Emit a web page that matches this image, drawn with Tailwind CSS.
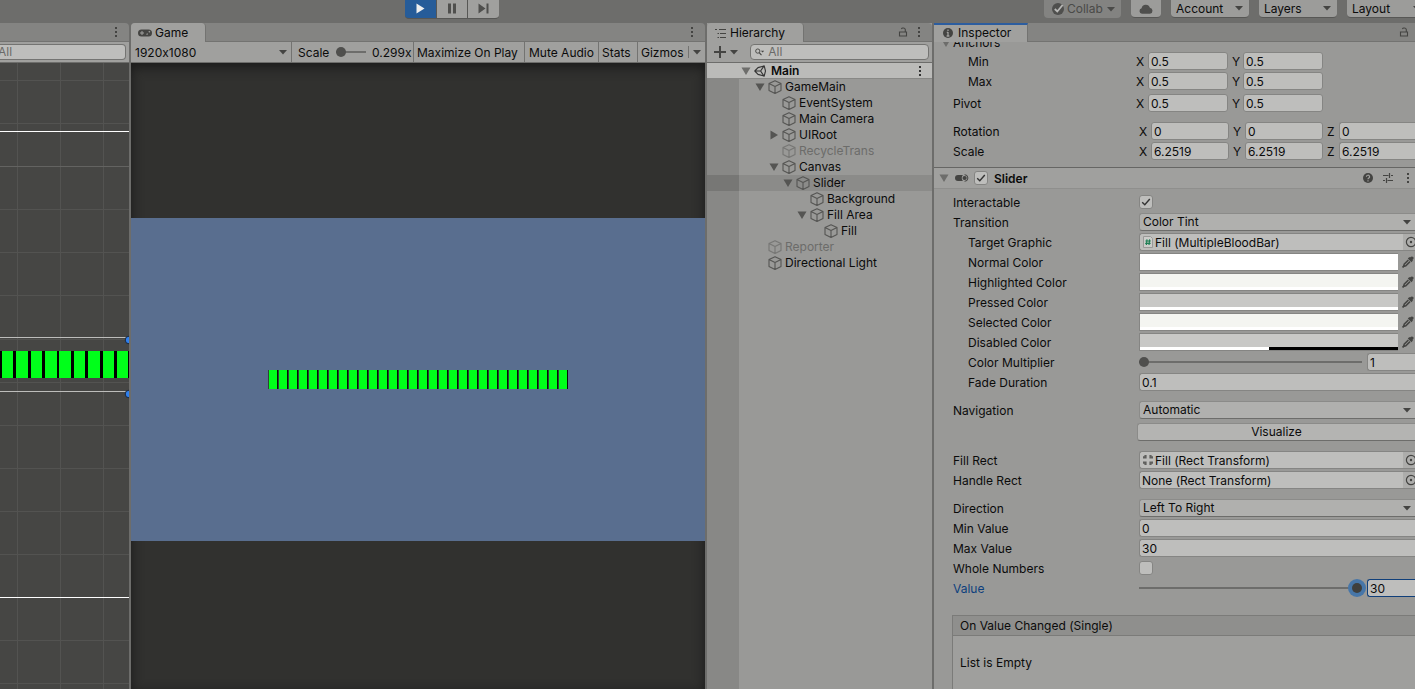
<!doctype html>
<html lang="en">
<head>
  <meta charset="utf-8">
  <meta name="viewport" content="width=device-width, initial-scale=1">
  <title>Unity Editor</title>
  <script src="https://cdn.jsdelivr.net/npm/@tailwindcss/browser@4"></script>
</head>
<body class="h-screen overflow-hidden flex flex-col bg-[#6d6d6b] text-[#0b0b0b] text-xs leading-4 font-['Inter',sans-serif] [font-feature-settings:'calt'_0]">

<!-- Shared icons -->
<svg class="hidden">
  <symbol id="cube" viewBox="0 0 14 14">
    <path d="M7 .7 13 3.5V10.5L7 13.4 1 10.5V3.5ZM1 3.5 7 6.4 13 3.5M7 6.4V13.4" fill="none" stroke="currentColor" stroke-width="1.1" stroke-linejoin="round" />
  </symbol>
  <symbol id="down" viewBox="0 0 8 5"><path d="M0 0H8L4 4.6Z" fill="currentColor" /></symbol>
  <symbol id="fold" viewBox="0 0 10 10"><path d="M.5 1.5H9.5L5 9Z" fill="currentColor" /></symbol>
  <symbol id="dots" viewBox="0 0 2 10"><path d="M0 0H2V2H0ZM0 4H2V6H0ZM0 8H2V10H0Z" fill="currentColor" /></symbol>
  <symbol id="lock" viewBox="0 0 10 10">
    <path d="M1.5 5H8.5V9H1.5ZM7.3 5V2.8A1.8 1.8 0 0 0 5.5 1H4.8A1.6 1.6 0 0 0 3.4 2" fill="none" stroke="currentColor" stroke-width="1.1" />
  </symbol>
  <symbol id="picker" viewBox="0 0 12 12">
    <circle cx="6" cy="6" r="4.6" fill="none" stroke="currentColor" stroke-width="1.2" /><circle cx="6" cy="6" r="1.2" fill="currentColor" />
  </symbol>
  <symbol id="dropper" viewBox="0 0 12 12">
    <path d="M8 1.4 9 .7Q10.2 0 11.2 1 12 2 11.3 3L10.4 4 11 4.6 9.4 6.2 5.8 2.6 7.4 1Z" fill="currentColor" />
    <path d="M6.4 4 2.2 8.2 1.6 10.4 3.8 9.8 8 5.6" fill="none" stroke="currentColor" stroke-width="1.5" />
    <path d="M.6 11.4 2.2 9.8" stroke="currentColor" stroke-width="1.6" />
  </symbol>
</svg>

<!-- Main toolbar -->
<header class="flex h-[23px] shrink-0 items-start pl-[405px]">
  <div class="flex h-[19px] gap-px border-b border-[#575755] bg-[#575755] rounded-b overflow-hidden">
    <button type="button" aria-label="Play" class="w-[31px] pb-px grid place-items-center bg-[#265c99]">
      <svg class="w-[9px] h-[11px]" viewBox="0 0 9 11"><path d="M.5 .5 8.5 5.5.5 10.5Z" fill="#eee" /></svg>
    </button>
    <button type="button" aria-label="Pause" class="w-[30px] pb-px grid place-items-center bg-[#a0a09e] text-[#4f4f4d]">
      <svg class="w-2 h-[11px]" viewBox="0 0 8 11"><path d="M0 .5H3V10.5H0ZM5 .5H8V10.5H5Z" fill="currentColor" /></svg>
    </button>
    <button type="button" aria-label="Step" class="w-[31px] pb-px grid place-items-center bg-[#a0a09e] text-[#4f4f4d]">
      <svg class="w-[11px] h-[11px]" viewBox="0 0 11 11"><path d="M.5 .5 7.5 5.5.5 10.5ZM8.5 .5H10.5V10.5H8.5Z" fill="currentColor" /></svg>
    </button>
  </div>

  <div class="ml-auto -mr-2.5 flex gap-2.5">
    <button type="button" class="flex h-[18px] w-[77px] items-center rounded-b bg-[#838381] pl-2 pr-1.5 text-[#4a4a48]">
      <svg class="w-3 h-3 mr-[3px]" viewBox="0 0 12 12"><circle cx="6" cy="6" r="6" fill="#4f4f4d" /><path d="M2.8 6 5.3 8.5 10.6 2" fill="none" stroke="#b8b8b6" stroke-width="1.8" /></svg>
      Collab
      <svg class="w-2 h-[5px] ml-auto"><use href="#down" /></svg>
    </button>
    <button type="button" aria-label="Services" class="h-[18px] w-[30px] rounded-b border-b border-[#575755] bg-[#9c9c9a] grid place-items-center text-[#4f4f4d]">
      <svg class="w-[14px] h-[10px]" viewBox="0 0 14 10"><path d="M3 9.8A2.8 2.8 0 0 1 2.6 4.3 4.3 4.3 0 0 1 10.9 3.7 3.1 3.1 0 0 1 11 9.8Z" fill="currentColor" /></svg>
    </button>
    <div class="relative">
      <select aria-label="Account" class="h-[18px] w-[78px] appearance-none rounded-b border-b border-[#575755] bg-[#9c9c9a] pl-[5px]"><option>Account</option></select>
      <svg class="pointer-events-none absolute right-1.5 top-1.5 w-2 h-[5px] text-[#444442]"><use href="#down" /></svg>
    </div>
    <div class="relative">
      <select aria-label="Layers" class="h-[18px] w-[78px] appearance-none rounded-b border-b border-[#575755] bg-[#9c9c9a] pl-[5px]"><option>Layers</option></select>
      <svg class="pointer-events-none absolute right-1.5 top-1.5 w-2 h-[5px] text-[#444442]"><use href="#down" /></svg>
    </div>
    <div class="relative">
      <select aria-label="Layout" class="h-[18px] w-[78px] appearance-none rounded-b border-b border-[#575755] bg-[#9c9c9a] pl-[5px]"><option>Layout</option></select>
      <svg class="pointer-events-none absolute right-1 top-1.5 w-2 h-[5px] text-[#444442]"><use href="#down" /></svg>
    </div>
  </div>
</header>

<main class="grid min-h-0 flex-1 grid-cols-[129px_minmax(0,1fr)_225px_481px] gap-0.5">

  <!-- Scene -->
  <section class="flex min-h-0 flex-col overflow-hidden">
    <div class="flex h-[19px] shrink-0 items-center justify-end rounded-tr border-b border-[#737371] bg-[#848482] pr-3 text-[#444442]">
      <svg class="w-0.5 h-2.5"><use href="#dots" /></svg>
    </div>
    <div class="flex h-[21px] shrink-0 items-center border-b border-[#6d6d6b] bg-[#a0a09e] pr-[3px]">
      <input type="text" aria-label="Search scene" placeholder="All" class="-ml-0.5 h-4 min-w-0 flex-1 rounded-r border border-l-0 border-[#747472] bg-[#bebebc] placeholder:text-[#6a6a68]">
    </div>
    <svg class="min-h-0 w-full flex-1 bg-[#464644]" viewBox="0 0 129 626" preserveAspectRatio="xMaxYMin slice" shape-rendering="crispEdges">
      <path d="M17.5 0V626M60.5 0V626M103.5 0V626M0 17.5H129M0 60.5H129M0 146.5H129M0 189.5H129M0 232.5H129M0 276.5H129M0 319.5H129M0 362.5H129M0 405.5H129M0 448.5H129M0 491.5H129M0 577.5H129M0 620.5H129" stroke="#535351" />
      <path d="M0 103.5H129" stroke="#636361" />
      <path d="M0 68.5H129M0 534.5H129" stroke="#fff" />
      <path d="M0 274.5H129M0 328.5H129" stroke="#bdbdbb" />
      <path d="M0 288H129V315H0Z" fill="#000" />
      <path d="M2 288h11v27h-11ZM16 288h12v27h-12ZM31 288h11v27h-11ZM45 288h12v27h-12ZM59 288h12v27h-12ZM74 288h11v27h-11ZM88 288h12v27h-12ZM103 288h11v27h-11ZM117 288h11v27h-11Z" fill="#00ff1a" />
      <g fill="#2e7fee" stroke="#1a2638" shape-rendering="auto"><circle cx="129" cy="277" r="3.8" /><circle cx="129" cy="331" r="3.8" /></g>
    </svg>
  </section>

  <!-- Game -->
  <section class="flex min-h-0 flex-col">
    <div class="flex h-[19px] shrink-0 items-center rounded-t border-b border-[#737371] bg-[#848482] pr-3 text-[#444442]">
      <div class="flex h-[19px] w-[75px] items-center gap-[3px] rounded-t border-r border-[#737371] bg-[#a0a09e] pl-[7px] pt-0.5">
        <svg class="w-[14px] h-2" viewBox="0 0 14 8"><rect y=".5" width="14" height="7" rx="3.5" fill="currentColor" /><path d="M2 4H6M4 2V6" stroke="#a0a09e" /><path d="M8.6 5.6 9.6 4.6M10.8 3.2 11.8 2.2" stroke="#a0a09e" stroke-width="1.3" /></svg>
        <span class="text-[#0b0b0b]">Game</span>
      </div>
      <svg class="ml-auto w-0.5 h-2.5"><use href="#dots" /></svg>
    </div>
    <div class="flex h-[21px] shrink-0 items-center border-b border-[#6d6d6b] bg-[#a0a09e] whitespace-nowrap">
      <div class="relative flex-1 h-full border-r border-[#737371]">
        <select aria-label="Resolution" class="h-full w-full appearance-none pl-1 pt-px"><option>1920x1080</option></select>
        <svg class="pointer-events-none absolute right-1 top-2 w-2 h-[5px] text-[#444442]"><use href="#down" /></svg>
      </div>
      <div class="flex h-full w-[122px] items-center border-r border-[#737371] pl-1.5">
        <label for="game-scale" class="w-[38px] pt-px">Scale</label>
        <input id="game-scale" type="range" min="0" max="10" value="0" class="w-[30px] h-2.5 appearance-none bg-transparent [&::-webkit-slider-runnable-track]:h-0.5 [&::-webkit-slider-runnable-track]:bg-[#6d6d6b] [&::-webkit-slider-thumb]:appearance-none [&::-webkit-slider-thumb]:size-2.5 [&::-webkit-slider-thumb]:-mt-1 [&::-webkit-slider-thumb]:rounded-full [&::-webkit-slider-thumb]:bg-[#4f4f4d]">
        <span class="ml-1.5 pt-px">0.299x</span>
      </div>
      <button type="button" class="h-full w-[111px] border-r border-[#737371] pl-[3px] pt-px text-left">Maximize On Play</button>
      <button type="button" class="h-full w-[74px] border-r border-[#737371] pl-1 pt-px text-left">Mute Audio</button>
      <button type="button" class="h-full w-[39px] border-r border-[#737371] pl-[3px] pt-px text-left">Stats</button>
      <button type="button" class="h-full w-[50px] pl-[3px] pt-px text-left">Gizmos</button>
      <button type="button" aria-label="Gizmo options" class="grid h-3 w-[17px] items-center border-l border-[#737371] pl-1 text-[#444442]"><svg class="w-2 h-[5px]"><use href="#down" /></svg></button>
    </div>
    <div class="flex min-h-0 flex-1 items-center bg-[#31312f] pt-[7px] shadow-[inset_0_4px_12px_#1a1a1a]">
      <div class="flex aspect-video w-full items-center justify-center bg-[#596e8f]">
        <svg class="w-[300px] h-[19px]" shape-rendering="crispEdges">
          <defs>
            <pattern id="blood" width="10" height="19" patternUnits="userSpaceOnUse"><path d="M0 0H10V19H0Z" fill="#000" /><path d="M0 0H1V19H0Z" fill="#30423a" /><path d="M1 0H9V19H1Z" fill="#00ff1a" /><path d="M9 0H10V19H9Z" fill="#061208" /></pattern>
          </defs>
          <rect width="300" height="19" fill="url(#blood)" />
        </svg>
      </div>
    </div>
  </section>

  <!-- Hierarchy -->
  <section class="flex min-h-0 flex-col bg-[#999997]">
    <div class="flex h-[19px] shrink-0 items-center rounded-t border-b border-[#737371] bg-[#848482] pr-3 text-[#444442]">
      <div class="flex h-[19px] w-[97px] items-center gap-[3px] rounded-t border-r border-[#737371] bg-[#a0a09e] pl-2 pt-0.5">
        <svg class="w-3 h-[9px]" viewBox="0 0 12 9"><path d="M0 .5H2M4 .5H11M2.5 4.5H4M5 4.5H11M2.5 8.5H4M5 8.5H11" stroke="currentColor" /></svg>
        <span class="text-[#0b0b0b]">Hierarchy</span>
      </div>
      <svg class="ml-auto w-2.5 h-2.5"><use href="#lock" /></svg>
      <svg class="ml-2.5 w-0.5 h-2.5"><use href="#dots" /></svg>
    </div>
    <div class="flex h-[21px] shrink-0 items-center border-b border-[#6d6d6b] bg-[#a0a09e] pl-[7px] pr-[3px] text-[#444442]">
      <button type="button" aria-label="Create" class="flex w-9 items-center gap-1">
        <svg class="w-3 h-3" viewBox="0 0 12 12"><path d="M0 6H12M6 0V12" stroke="currentColor" stroke-width="2" /></svg>
        <svg class="w-2 h-[5px]"><use href="#down" /></svg>
      </button>
      <div class="flex h-4 flex-1 items-center rounded border border-[#747472] bg-[#bebebc] pl-1">
        <svg class="w-2.5 h-2" viewBox="0 0 10 8"><circle cx="3" cy="3" r="2.3" fill="none" stroke="currentColor" /><path d="M4.6 4.6 7 7.4" stroke="currentColor" stroke-width="1.2" /><path d="M6.4 2.6H10L8.2 4.6Z" fill="currentColor" /></svg>
        <input type="text" aria-label="Search hierarchy" placeholder="All" class="ml-1 w-full min-w-0 placeholder:text-[#6a6a68]">
      </div>
    </div>
    <div class="flex h-4 shrink-0 items-center border-b border-[#888886] bg-[#bbbbb9] pl-[34px] pr-[11px] font-semibold">
      <svg class="w-2.5 h-2.5 mr-[3px] text-[#6d6d6b]"><use href="#fold" /></svg>
      <svg class="w-3 h-3 mr-[5px]" viewBox="0 0 12 12"><path d="M.8 6 4 2.6 10.2.9 11.5 6 10.2 11.1 4 9.4ZM.8 6H6.6M6.6 6 10 .9M6.6 6 10 11.1" fill="none" stroke="#333" stroke-width="1.1" stroke-linejoin="round" /></svg>
      <span>Main</span>
      <svg class="ml-auto w-0.5 h-2.5 text-[#333]"><use href="#dots" /></svg>
    </div>
    <ul class="flex-1 border-l-[32px] border-[#888886] [&_svg]:text-[#555553]">
      <li class="flex h-4 items-center gap-[3px] pl-4"><svg class="w-2.5 h-2.5"><use href="#fold" /></svg><svg class="w-[14px] h-[14px]"><use href="#cube" /></svg>GameMain</li>
      <li class="flex h-4 items-center gap-[3px] pl-[43px]"><svg class="w-[14px] h-[14px]"><use href="#cube" /></svg>EventSystem</li>
      <li class="flex h-4 items-center gap-[3px] pl-[43px]"><svg class="w-[14px] h-[14px]"><use href="#cube" /></svg>Main Camera</li>
      <li class="flex h-4 items-center gap-[3px] pl-[30px]"><svg class="w-2.5 h-2.5 -rotate-90"><use href="#fold" /></svg><svg class="w-[14px] h-[14px]"><use href="#cube" /></svg>UIRoot</li>
      <li class="flex h-4 items-center gap-[3px] pl-[43px] text-[#6c6c6a]"><svg class="w-[14px] h-[14px] opacity-50"><use href="#cube" /></svg>RecycleTrans</li>
      <li class="flex h-4 items-center gap-[3px] pl-[30px]"><svg class="w-2.5 h-2.5"><use href="#fold" /></svg><svg class="w-[14px] h-[14px]"><use href="#cube" /></svg>Canvas</li>
      <li class="-ml-8 flex h-4 items-center gap-[3px] border-l-[32px] border-[#777775] bg-[#8b8b89] pl-11"><svg class="w-2.5 h-2.5"><use href="#fold" /></svg><svg class="w-[14px] h-[14px]"><use href="#cube" /></svg>Slider</li>
      <li class="flex h-4 items-center gap-[3px] pl-[71px]"><svg class="w-[14px] h-[14px]"><use href="#cube" /></svg>Background</li>
      <li class="flex h-4 items-center gap-[3px] pl-[58px]"><svg class="w-2.5 h-2.5"><use href="#fold" /></svg><svg class="w-[14px] h-[14px]"><use href="#cube" /></svg>Fill Area</li>
      <li class="flex h-4 items-center gap-[3px] pl-[85px]"><svg class="w-[14px] h-[14px]"><use href="#cube" /></svg>Fill</li>
      <li class="flex h-4 items-center gap-[3px] pl-[29px] text-[#6c6c6a]"><svg class="w-[14px] h-[14px] opacity-50"><use href="#cube" /></svg>Reporter</li>
      <li class="flex h-4 items-center gap-[3px] pl-[29px]"><svg class="w-[14px] h-[14px]"><use href="#cube" /></svg>Directional Light</li>
    </ul>
  </section>

  <!-- Inspector -->
  <section class="flex min-h-0 flex-col overflow-hidden bg-[#999997]">
    <div class="flex h-[19px] shrink-0 items-center border-b border-[#737371] bg-[#848482] pr-1.5 text-[#444442]">
      <div class="flex h-[19px] w-[94px] items-center gap-[5px] border-t-2 border-r border-t-[#2c5d9f] border-r-[#737371] bg-[#a0a09e] pl-[9px]">
        <svg class="w-2.5 h-2.5" viewBox="0 0 10 10"><circle cx="5" cy="5" r="5" fill="currentColor" /><path d="M5 1.6V3M5 4V8.2M3.8 4.4H5M3.6 8H6.4" stroke="#a0a09e" stroke-width="1.3" /></svg>
        <span class="text-[#0b0b0b]">Inspector</span>
      </div>
      <svg class="ml-auto w-2.5 h-2.5"><use href="#lock" /></svg>
    </div>

    <div class="min-h-0 flex-1 overflow-hidden">
      <!-- Rect Transform, scrolled under the tab bar -->
      <div class="-mt-2 flex flex-col gap-0.5 pb-[7px]">
        <div class="flex h-4 items-center gap-0.5 pl-[7px] pt-0.5"><svg class="w-2.5 h-2.5 text-[#6d6d6b]"><use href="#fold" /></svg>Anchors</div>
        <div class="flex h-[18px] items-center">
          <span class="w-[202px] pl-[34px] pt-px">Min</span>
          <label for="min-x" class="w-3 pt-px">X</label>
          <input id="min-x" type="text" value="0.5" class="h-[18px] w-20 mr-1 rounded-[3px] border border-[#858583] bg-[#bebebc] pl-0.5 pt-px">
          <label for="min-y" class="w-[11px] pt-px">Y</label>
          <input id="min-y" type="text" value="0.5" class="h-[18px] w-20 rounded-[3px] border border-[#858583] bg-[#bebebc] pl-0.5 pt-px">
        </div>
        <div class="flex h-[18px] items-center">
          <span class="w-[202px] pl-[34px] pt-px">Max</span>
          <label for="max-x" class="w-3 pt-px">X</label>
          <input id="max-x" type="text" value="0.5" class="h-[18px] w-20 mr-1 rounded-[3px] border border-[#858583] bg-[#bebebc] pl-0.5 pt-px">
          <label for="max-y" class="w-[11px] pt-px">Y</label>
          <input id="max-y" type="text" value="0.5" class="h-[18px] w-20 rounded-[3px] border border-[#858583] bg-[#bebebc] pl-0.5 pt-px">
        </div>
        <div class="mt-0.5 flex h-[18px] items-center">
          <span class="w-[202px] pl-[19px] pt-px">Pivot</span>
          <label for="pivot-x" class="w-3 pt-px">X</label>
          <input id="pivot-x" type="text" value="0.5" class="h-[18px] w-20 mr-1 rounded-[3px] border border-[#858583] bg-[#bebebc] pl-0.5 pt-px">
          <label for="pivot-y" class="w-[11px] pt-px">Y</label>
          <input id="pivot-y" type="text" value="0.5" class="h-[18px] w-20 rounded-[3px] border border-[#858583] bg-[#bebebc] pl-0.5 pt-px">
        </div>
        <div class="mt-2 flex h-[18px] items-center">
          <span class="w-[205px] pl-[19px] pt-px">Rotation</span>
          <label for="rot-x" class="w-3 pt-px">X</label>
          <input id="rot-x" type="text" value="0" class="h-[18px] w-[78px] mr-1 rounded-[3px] border border-[#858583] bg-[#bebebc] pl-0.5 pt-px">
          <label for="rot-y" class="w-3 pt-px">Y</label>
          <input id="rot-y" type="text" value="0" class="h-[18px] w-[78px] mr-1 rounded-[3px] border border-[#858583] bg-[#bebebc] pl-0.5 pt-px">
          <label for="rot-z" class="w-3 pt-px">Z</label>
          <input id="rot-z" type="text" value="0" class="h-[18px] min-w-0 flex-1 rounded-l-[3px] border border-r-0 border-[#858583] bg-[#bebebc] pl-0.5 pt-px">
        </div>
        <div class="flex h-[18px] items-center">
          <span class="w-[205px] pl-[19px] pt-px">Scale</span>
          <label for="scale-x" class="w-3 pt-px">X</label>
          <input id="scale-x" type="text" value="6.2519" class="h-[18px] w-[78px] mr-1 rounded-[3px] border border-[#858583] bg-[#bebebc] pl-0.5 pt-px">
          <label for="scale-y" class="w-3 pt-px">Y</label>
          <input id="scale-y" type="text" value="6.2519" class="h-[18px] w-[78px] mr-1 rounded-[3px] border border-[#858583] bg-[#bebebc] pl-0.5 pt-px">
          <label for="scale-z" class="w-3 pt-px">Z</label>
          <input id="scale-z" type="text" value="6.2519" class="h-[18px] min-w-0 flex-1 rounded-l-[3px] border border-r-0 border-[#858583] bg-[#bebebc] pl-0.5 pt-px">
        </div>
      </div>

      <!-- Slider component -->
      <div class="flex h-[22px] items-center border-t border-b border-t-[#666664] border-b-[#8f8f8d] bg-[#a0a09e] pl-[5px] pr-1.5 text-[#444442]">
        <svg class="w-2.5 h-2.5 mr-[5px] text-[#6d6d6b]"><use href="#fold" /></svg>
        <svg class="w-4 h-2 mr-1" viewBox="0 0 16 8"><path d="M4 1H9A4.2 4.2 0 0 0 9 7H4A3 3 0 0 1 4 1Z" fill="currentColor" /><circle cx="10.6" cy="4" r="2.1" fill="currentColor" /><path d="M10.6.7A3.3 3.3 0 0 1 10.6 7.3" fill="none" stroke="currentColor" /></svg>
        <span class="relative mr-1.5 size-[14px]">
          <input id="slider-on" type="checkbox" checked class="block size-[14px] appearance-none rounded-[3px] border border-[#858583] bg-[#bebebc]">
          <svg class="pointer-events-none absolute inset-0 w-[14px] h-[14px]" viewBox="0 0 14 14"><path d="M3.2 7.2 5.8 9.8 10.8 4" fill="none" stroke="#333" stroke-width="1.4" /></svg>
        </span>
        <label for="slider-on" class="pt-px font-semibold text-[#0b0b0b]">Slider</label>
        <svg class="ml-auto w-2.5 h-2.5" viewBox="0 0 10 10"><circle cx="5" cy="5" r="5" fill="currentColor" /><path d="M3.4 3.8A1.6 1.5 0 1 1 5.6 5.1Q5 5.4 5 6.2M5 7.2V8.4" fill="none" stroke="#a0a09e" stroke-width="1.2" /></svg>
        <svg class="ml-2.5 w-2.5 h-2.5" viewBox="0 0 10 10"><path d="M0 2.5H5.5M8 2.5H10M6.5 0V5M0 7.5H2M4.5 7.5H10M3.5 5V10" stroke="currentColor" stroke-width="1.2" /></svg>
        <svg class="ml-3.5 w-0.5 h-2.5"><use href="#dots" /></svg>
      </div>

      <div class="flex flex-col gap-0.5 pt-1">
        <div class="flex h-[18px] items-center">
          <label for="interactable" class="w-[205px] pl-[19px] pt-px">Interactable</label>
          <span class="relative size-[14px]">
            <input id="interactable" type="checkbox" checked class="block size-[14px] appearance-none rounded-[3px] border border-[#858583] bg-[#bebebc]">
            <svg class="pointer-events-none absolute inset-0 w-[14px] h-[14px]" viewBox="0 0 14 14"><path d="M3.2 7.2 5.8 9.8 10.8 4" fill="none" stroke="#333" stroke-width="1.4" /></svg>
          </span>
        </div>
        <div class="relative flex h-[18px] items-center">
          <label for="transition" class="w-[205px] pl-[19px] pt-px">Transition</label>
          <select id="transition" class="h-[18px] flex-1 appearance-none rounded-l-[3px] border border-r-0 border-[#8b8b89] border-b-[#6d6d6b] bg-[#b0b0ae] pl-[3px] pb-px"><option>Color Tint</option></select>
          <svg class="pointer-events-none absolute right-1 top-[7px] w-2 h-[5px] text-[#444442]"><use href="#down" /></svg>
        </div>
        <div class="flex h-[18px] items-center">
          <span class="w-[205px] pl-[34px] pt-px">Target Graphic</span>
          <button type="button" class="flex h-[18px] flex-1 items-center gap-px overflow-hidden rounded-l-[3px] border border-r-0 border-[#858583] bg-[#bebebc] pl-0.5 text-left">
            <svg class="w-3 h-3" viewBox="0 0 12 12"><path d="M1.5 .5H8.5L10.5 2.5V11.5H1.5Z" fill="#ccccca" stroke="#999997" /><path d="M5 3.4 4.4 9M7.6 3.4 7 9M3.4 5H8.8M3.2 7.4H8.6" stroke="#1f7f55" stroke-width="1.2" /></svg>
            <span class="flex-1 pt-px">Fill (MultipleBloodBar)</span>
            <span class="-mr-0.5 flex h-full w-3.5 items-center bg-[#adadab] pl-0.5 text-[#444442]"><svg class="w-3 h-3 shrink-0"><use href="#picker" /></svg></span>
          </button>
        </div>
        <div class="flex h-[18px] items-center">
          <span class="w-[205px] pl-[34px] pt-px">Normal Color</span>
          <button type="button" aria-label="Normal Color" class="h-[18px] flex-1 border-y border-l border-[#858583] bg-white"></button>
          <button type="button" aria-label="Pick normal color" class="w-[17px] pl-1 text-[#444442]"><svg class="w-3 h-3"><use href="#dropper" /></svg></button>
        </div>
        <div class="flex h-[18px] items-center">
          <span class="w-[205px] pl-[34px] pt-px">Highlighted Color</span>
          <button type="button" aria-label="Highlighted Color" class="flex h-[18px] flex-1 items-end border-y border-l border-[#858583] bg-[#f4f5f1]"><span class="h-[3px] w-full bg-white"></span></button>
          <button type="button" aria-label="Pick highlighted color" class="w-[17px] pl-1 text-[#444442]"><svg class="w-3 h-3"><use href="#dropper" /></svg></button>
        </div>
        <div class="flex h-[18px] items-center">
          <span class="w-[205px] pl-[34px] pt-px">Pressed Color</span>
          <button type="button" aria-label="Pressed Color" class="flex h-[18px] flex-1 items-end border-y border-l border-[#858583] bg-[#c8c8c6]"><span class="h-[3px] w-full bg-white"></span></button>
          <button type="button" aria-label="Pick pressed color" class="w-[17px] pl-1 text-[#444442]"><svg class="w-3 h-3"><use href="#dropper" /></svg></button>
        </div>
        <div class="flex h-[18px] items-center">
          <span class="w-[205px] pl-[34px] pt-px">Selected Color</span>
          <button type="button" aria-label="Selected Color" class="flex h-[18px] flex-1 items-end border-y border-l border-[#858583] bg-[#f4f5f1]"><span class="h-[3px] w-full bg-white"></span></button>
          <button type="button" aria-label="Pick selected color" class="w-[17px] pl-1 text-[#444442]"><svg class="w-3 h-3"><use href="#dropper" /></svg></button>
        </div>
        <div class="flex h-[18px] items-center">
          <span class="w-[205px] pl-[34px] pt-px">Disabled Color</span>
          <button type="button" aria-label="Disabled Color" class="flex h-[18px] flex-1 items-end border-y border-l border-[#858583] bg-[#c8c8c6]"><span class="h-[3px] w-1/2 bg-white"></span><span class="h-[3px] w-1/2 bg-black"></span></button>
          <button type="button" aria-label="Pick disabled color" class="w-[17px] pl-1 text-[#444442]"><svg class="w-3 h-3"><use href="#dropper" /></svg></button>
        </div>
        <div class="flex h-[18px] items-center">
          <label for="multiplier" class="w-[205px] pl-[34px] pt-px">Color Multiplier</label>
          <input id="multiplier" type="range" min="1" max="5" value="1" class="mr-[5px] h-2.5 min-w-0 flex-1 appearance-none bg-transparent [&::-webkit-slider-runnable-track]:h-0.5 [&::-webkit-slider-runnable-track]:bg-[#6d6d6b] [&::-webkit-slider-thumb]:appearance-none [&::-webkit-slider-thumb]:size-2.5 [&::-webkit-slider-thumb]:-mt-1 [&::-webkit-slider-thumb]:rounded-full [&::-webkit-slider-thumb]:bg-[#4f4f4d]">
          <input type="text" aria-label="Color Multiplier value" value="1" class="h-[18px] w-12 rounded-l-[3px] border border-r-0 border-[#858583] bg-[#bebebc] pl-0.5 pt-px">
        </div>
        <div class="flex h-[18px] items-center">
          <label for="fade" class="w-[205px] pl-[34px] pt-px">Fade Duration</label>
          <input id="fade" type="text" value="0.1" class="h-[18px] min-w-0 flex-1 rounded-l-[3px] border border-r-0 border-[#858583] bg-[#bebebc] pl-0.5 pt-px">
        </div>

        <div class="relative mt-2 flex h-[18px] items-center">
          <label for="navigation" class="w-[205px] pl-[19px] pt-px">Navigation</label>
          <select id="navigation" class="h-[18px] flex-1 appearance-none rounded-l-[3px] border border-r-0 border-[#8b8b89] border-b-[#6d6d6b] bg-[#b0b0ae] pl-[3px] pb-px"><option>Automatic</option></select>
          <svg class="pointer-events-none absolute right-1 top-[7px] w-2 h-[5px] text-[#444442]"><use href="#down" /></svg>
        </div>
        <button type="button" class="mt-0.5 ml-[203px] h-[18px] rounded-l-[3px] border border-r-0 border-[#8b8b89] border-b-[#6d6d6b] bg-[#b4b4b2] leading-4">Visualize</button>

        <div class="mt-2 flex h-[18px] items-center">
          <span class="w-[205px] pl-[19px] pt-px">Fill Rect</span>
          <button type="button" class="flex h-[18px] flex-1 items-center gap-px overflow-hidden rounded-l-[3px] border border-r-0 border-[#858583] bg-[#bebebc] pl-0.5 text-left">
            <svg class="w-3 h-3" viewBox="0 0 12 12"><path d="M1 2.2H2.4V1H4.6V4.6H1ZM11 2.2H9.6V1H7.4V4.6H11ZM1 9.8H2.4V11H4.6V7.4H1ZM11 9.8H9.6V11H7.4V7.4H11Z" fill="#5f5f5d" /></svg>
            <span class="flex-1 pt-px">Fill (Rect Transform)</span>
            <span class="-mr-0.5 flex h-full w-3.5 items-center bg-[#adadab] pl-0.5 text-[#444442]"><svg class="w-3 h-3 shrink-0"><use href="#picker" /></svg></span>
          </button>
        </div>
        <div class="flex h-[18px] items-center">
          <span class="w-[205px] pl-[19px] pt-px">Handle Rect</span>
          <button type="button" class="flex h-[18px] flex-1 items-center overflow-hidden rounded-l-[3px] border border-r-0 border-[#858583] bg-[#bebebc] pl-0.5 text-left">
            <span class="flex-1 pt-px">None (Rect Transform)</span>
            <span class="-mr-0.5 flex h-full w-3.5 items-center bg-[#adadab] pl-0.5 text-[#444442]"><svg class="w-3 h-3 shrink-0"><use href="#picker" /></svg></span>
          </button>
        </div>

        <div class="relative mt-2 flex h-[18px] items-center">
          <label for="direction" class="w-[205px] pl-[19px] pt-px">Direction</label>
          <select id="direction" class="h-[18px] flex-1 appearance-none rounded-l-[3px] border border-r-0 border-[#8b8b89] border-b-[#6d6d6b] bg-[#b0b0ae] pl-[3px] pb-px"><option>Left To Right</option></select>
          <svg class="pointer-events-none absolute right-1 top-[7px] w-2 h-[5px] text-[#444442]"><use href="#down" /></svg>
        </div>
        <div class="flex h-[18px] items-center">
          <label for="min-value" class="w-[205px] pl-[19px] pt-px">Min Value</label>
          <input id="min-value" type="text" value="0" class="h-[18px] min-w-0 flex-1 rounded-l-[3px] border border-r-0 border-[#858583] bg-[#bebebc] pl-0.5 pt-px">
        </div>
        <div class="flex h-[18px] items-center">
          <label for="max-value" class="w-[205px] pl-[19px] pt-px">Max Value</label>
          <input id="max-value" type="text" value="30" class="h-[18px] min-w-0 flex-1 rounded-l-[3px] border border-r-0 border-[#858583] bg-[#bebebc] pl-0.5 pt-px">
        </div>
        <div class="flex h-[18px] items-center">
          <label for="whole" class="w-[205px] pl-[19px] pt-px">Whole Numbers</label>
          <input id="whole" type="checkbox" class="size-[14px] appearance-none rounded-[3px] border border-[#858583] bg-[#bebebc]">
        </div>
        <div class="flex h-[18px] items-center">
          <label for="value" class="w-[205px] pl-[19px] pt-px text-[#0d3f7d]">Value</label>
          <input id="value" type="range" min="0" max="30" value="30" class="mr-[5px] h-2.5 min-w-0 flex-1 appearance-none bg-transparent [&::-webkit-slider-runnable-track]:h-0.5 [&::-webkit-slider-runnable-track]:bg-[#6d6d6b] [&::-webkit-slider-thumb]:appearance-none [&::-webkit-slider-thumb]:size-2.5 [&::-webkit-slider-thumb]:-mt-1 [&::-webkit-slider-thumb]:rounded-full [&::-webkit-slider-thumb]:bg-[#3f3f3d] [&::-webkit-slider-thumb]:shadow-[0_0_0_4px_#4776a8]">
          <input type="text" aria-label="Slider value" value="30" class="h-[18px] w-12 rounded-l-[3px] border border-r-0 border-[#103f7a] bg-[#bebebc] pl-0.5 pt-px">
        </div>
      </div>

      <!-- Event list -->
      <div class="ml-[18px] mt-[18px] border-l border-t border-[#7b7b79]">
        <h2 class="h-5 border-b border-[#7b7b79] bg-[#8f8f8d] pl-[7px] leading-5">On Value Changed (Single)</h2>
        <p class="h-24 bg-[#9f9f9d] pl-[7px] pt-[19px]">List is Empty</p>
      </div>
    </div>
  </section>
</main>
</body>
</html>
